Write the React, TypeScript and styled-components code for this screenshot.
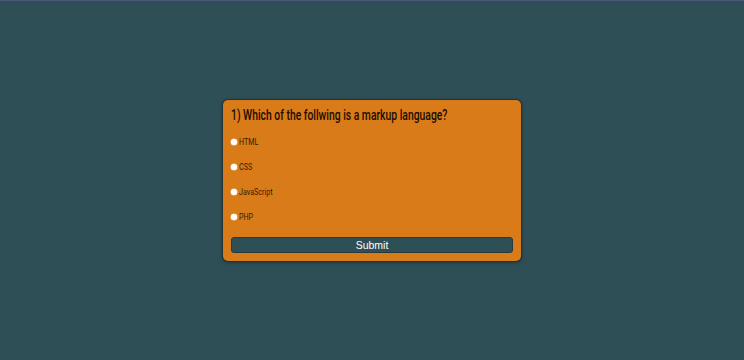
import { useState } from 'react';
import styled, { createGlobalStyle } from 'styled-components';

const GlobalStyle = createGlobalStyle`
  html, body {
    margin: 0;
    padding: 0;
    background: #2e4f56;
  }
  html {
    border-top: 1px solid #4b5a7a;
  }
  body {
    font-family: Roboto, 'Liberation Sans', sans-serif;
  }
`;

const Page = styled.div`
  min-height: 359px;
  display: flex;
  align-items: center;
  justify-content: center;
`;

const QuizCard = styled.div`
  width: 298px;
  box-sizing: border-box;
  padding: 7px 8px 8px;
  background: #d97b19;
  border-radius: 5px;
  box-shadow: 0 0 0 1px #1f3236, 0 1px 4px rgba(0, 0, 0, 0.45);
  display: flex;
  flex-direction: column;
`;

// the reference uses a condensed face; squeeze Roboto to match
const Question = styled.h2`
  margin: 0;
  font-size: 14px;
  line-height: 17px;
  font-weight: 500;
  color: #1b0d00;
  white-space: nowrap;
  transform: scaleX(0.74);
  transform-origin: left center;
`;

const Options = styled.ul`
  list-style: none;
  margin: 6px 0 0;
  padding: 0;
  display: flex;
  flex-direction: column;
`;

const Option = styled.li`
  height: 24.7px;
  display: flex;
  align-items: center;
`;

const OptionLabel = styled.label`
  display: flex;
  align-items: center;
  gap: 2px;
  cursor: pointer;
`;

const OptionText = styled.span`
  display: inline-block;
  font-size: 8.5px;
  color: #3b1c00;
  transform: scaleX(0.84);
  transform-origin: left center;
`;

const Radio = styled.input`
  appearance: none;
  margin: 0;
  width: 6px;
  height: 6px;
  border-radius: 50%;
  background: #ffffff;
  box-shadow: 0 0 0 0.5px #f4d7b0;
  &:checked {
    background: radial-gradient(circle, #2e4f56 40%, #ffffff 45%);
  }
`;

const SubmitButton = styled.button`
  margin-top: 8px;
  height: 16px;
  padding: 0;
  border: 1px solid #223a40;
  border-radius: 3px;
  background: #2e4f56;
  color: #ffffff;
  font-family: 'Liberation Sans', Arial, sans-serif;
  font-size: 10.5px;
  cursor: pointer;
`;

const answers = ['HTML', 'CSS', 'JavaScript', 'PHP'];

const App = () => {
  const [picked, setPicked] = useState<string | null>(null);
  return (
    <>
      <GlobalStyle />
      <Page>
        <QuizCard>
          <Question>1) Which of the follwing is a markup language?</Question>
          <Options>
            {answers.map((a) => (
              <Option key={a}>
                <OptionLabel>
                  <Radio
                    type="radio"
                    name="answer"
                    checked={picked === a}
                    onChange={() => setPicked(a)}
                  />
                  <OptionText>{a}</OptionText>
                </OptionLabel>
              </Option>
            ))}
          </Options>
          <SubmitButton>Submit</SubmitButton>
        </QuizCard>
      </Page>
    </>
  );
};

export default App;
